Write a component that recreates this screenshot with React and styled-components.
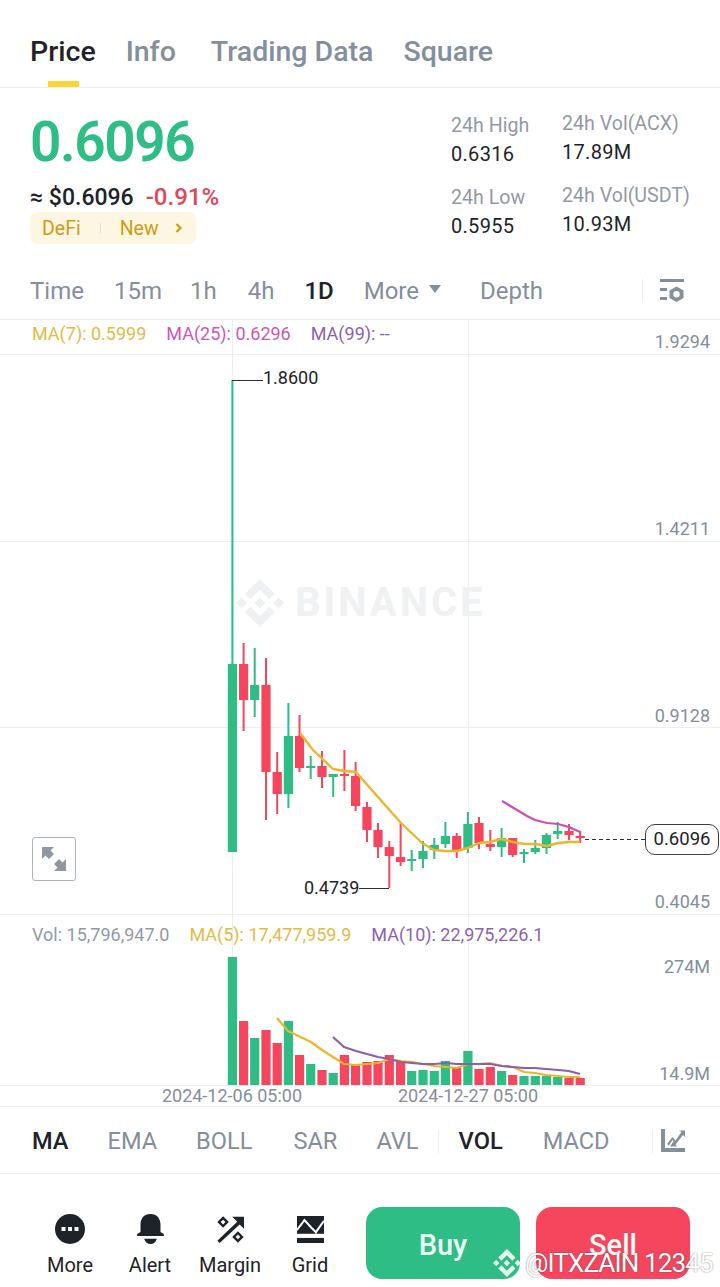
import styled, { createGlobalStyle } from 'styled-components'

const GREEN = '#2ebd85'
const RED = '#f6465d'
const DARK = '#1e2329'
const GRAY = '#848e9c'
const LINE = '#eceef0'

const Global = createGlobalStyle`
    html, body { margin: 0; padding: 0; background: #fff; }
    body { font-family: Roboto, "Noto Sans", sans-serif; color: ${DARK}; }
`

const Page = styled.div`
    position: relative;
    width: 720px;
    height: 1287px;
    overflow: hidden;
    background: #fff;
`

const TabBar = styled.div`
    display: flex;
    height: 88px;
    padding: 34px 0 0 30px;
    box-sizing: border-box;
    border-bottom: 1px solid ${LINE};
`

const Tab = styled.div`
    position: relative;
    margin-right: ${p => p.$gap}px;
    font-size: 28.5px;
    line-height: 36px;
    font-weight: 500;
    color: ${p => (p.$active ? DARK : '#848e9c')};
    &::after {
        content: '';
        display: ${p => (p.$active ? 'block' : 'none')};
        position: absolute;
        left: 18px;
        top: 47px;
        width: 31px;
        height: 6px;
        background: #fcd535;
    }
`

const Summary = styled.div`
    display: flex;
    justify-content: space-between;
    height: 177px;
    padding: 0 0 0 30px;
`

const PriceCol = styled.div`
    display: flex;
    flex-direction: column;
    align-items: flex-start;
`

const BigPrice = styled.div`
    margin-top: 21px;
    font-size: 55px;
    line-height: 66px;
    font-weight: 600;
    letter-spacing: -1.4px;
    color: ${GREEN};
`

const FiatRow = styled.div`
    display: flex;
    align-items: baseline;
    gap: 12px;
    margin-top: 8px;
    font-size: 23px;
    line-height: 28px;
    font-weight: 500;
`

const Change = styled.span`
    color: #e0475c;
    font-size: 24px;
`

const TagPill = styled.div`
    display: flex;
    align-items: center;
    width: 166px;
    height: 32px;
    padding: 0 10px 0 12px;
    box-sizing: border-box;
    border-radius: 7px;
    background: #fdf6e3;
    color: #cf9d14;
    font-size: 19.5px;
`

const TagDivider = styled.span`
    width: 1px;
    height: 10px;
    margin: 0 19px;
    background: #eadfc0;
`

const TagChevron = styled.svg`
    margin-left: 15px;
`

const Stats = styled.div`
    display: grid;
    grid-template-columns: 111px 158px;
    grid-template-rows: 72px 72px;
    margin-top: 26px;
`

const Stat = styled.div`
    display: flex;
    flex-direction: column;
    gap: 4px;
    margin-top: ${p => (p.$up ? '-2px' : '0')};
`

const StatLabel = styled.div`
    font-size: 19.6px;
    line-height: 24px;
    color: #929aa5;
`

const StatValue = styled.div`
    font-size: 20px;
    line-height: 24px;
    letter-spacing: 0.3px;
`

const IntervalBar = styled.div`
    display: flex;
    align-items: center;
    padding: 0 0 3px 30px;
    box-sizing: border-box;
    height: 55px;
    border-bottom: 1px solid ${LINE};
    font-size: 24px;
    color: ${GRAY};
`

const Interval = styled.span`
    margin-right: ${p => p.$gap}px;
    color: ${p => (p.$active ? DARK : GRAY)};
    font-weight: ${p => (p.$active ? 500 : 400)};
`

const Caret = styled.span`
    width: 0;
    height: 0;
    margin: -4px 39px 0 10px;
    border-left: 6.5px solid transparent;
    border-right: 6.5px solid transparent;
    border-top: 8px solid ${GRAY};
`

const BarDivider = styled.span`
    width: 1px;
    height: 24px;
    background: ${LINE};
    margin-right: ${p => p.$gap}px;
`

const ChartPanel = styled.div`
    position: relative;
    height: 786px;
    border-bottom: 1px solid ${LINE};
`

const ChartSvg = styled.svg`
    position: absolute;
    left: 0;
    top: 0;
`

const Legend = styled.div`
    position: absolute;
    left: ${p => p.$left}px;
    top: ${p => p.$top}px;
    display: flex;
    gap: ${p => p.$gap}px;
    font-size: ${p => p.$size}px;
    line-height: 24px;
    white-space: nowrap;
`

const LegendItem = styled.span`
    color: ${p => p.$color};
`

const AxisLabel = styled.div`
    position: absolute;
    right: 10px;
    top: ${p => p.$top - 320 - 12}px;
    font-size: 18px;
    line-height: 24px;
    color: ${GRAY};
`

const DateLabel = styled.div`
    position: absolute;
    left: ${p => p.$center - 100}px;
    top: ${p => p.$top - 320 - 12}px;
    width: 200px;
    text-align: center;
    font-size: 18px;
    line-height: 24px;
    color: ${GRAY};
`

const Annotation = styled.div`
    position: absolute;
    left: ${p => p.$left}px;
    top: ${p => p.$top - 320 - 12}px;
    font-size: 18px;
    line-height: 24px;
    color: ${DARK};
`

const PriceTag = styled.div`
    position: absolute;
    left: 645px;
    top: 504px;
    width: 74px;
    height: 31px;
    box-sizing: border-box;
    border: 1px solid #3a3f45;
    border-radius: 10px;
    background: #fff;
    font-size: 18.5px;
    line-height: 29px;
    text-align: center;
    color: ${DARK};
`

const ExpandButton = styled.div`
    position: absolute;
    left: 32px;
    top: 517px;
    width: 44px;
    height: 44px;
    box-sizing: border-box;
    display: flex;
    align-items: center;
    justify-content: center;
    border: 1px solid #aeb4bc;
    border-radius: 3px;
    background: #fff;
`

const Watermark = styled.div`
    position: absolute;
    left: 236px;
    top: 259px;
    display: flex;
    align-items: center;
    gap: 11px;
    color: #f0f1f2;
    font-size: 40px;
    line-height: 48px;
    font-weight: 700;
    letter-spacing: 3px;
`

const IndicatorBar = styled.div`
    display: flex;
    align-items: center;
    height: 67px;
    padding: 2px 0 0 32px;
    box-sizing: border-box;
    border-bottom: 1px solid ${LINE};
    font-size: 23.6px;
    color: ${GRAY};
`

const Footer = styled.div`
    display: flex;
    align-items: flex-start;
    padding: 33px 0 0 30px;
`

const ActionList = styled.div`
    display: flex;
    width: 320px;
    margin-right: 16px;
`

const Action = styled.div`
    display: flex;
    flex-direction: column;
    align-items: center;
    width: 80px;
    font-size: 20px;
    line-height: 26px;
    gap: 8px;
    margin-top: 7px;
`

const ActionIcon = styled.div`
    display: flex;
    align-items: center;
    justify-content: center;
    height: 30px;
`

const TradeButton = styled.div`
    display: flex;
    align-items: center;
    justify-content: center;
    width: 154px;
    height: 72px;
    margin-right: 16px;
    padding-top: 3px;
    box-sizing: border-box;
    border-radius: 16px;
    background: ${p => p.$color};
    color: #eafbf4;
    font-size: 29px;
    font-weight: 500;
`

const PostTag = styled.div`
    position: absolute;
    left: 493px;
    top: 1249px;
    display: flex;
    align-items: center;
    gap: 4px;
    color: #fff;
    font-size: 26px;
    line-height: 28px;
    letter-spacing: -0.85px;
    white-space: nowrap;
    text-shadow: 0 0 1.5px rgba(40, 45, 50, 0.7);
`

// [x, wick top, wick bottom, body top, body bottom, up?, volume top]
const candles = [
    [232.4, 380, 852, 664, 852, 1, 957],
    [243.6, 643, 731, 664, 700, 0, 1021],
    [254.7, 648, 717, 685, 700, 1, 1038],
    [266, 658, 820, 685, 772, 0, 1030],
    [277.2, 752, 814, 772, 794, 0, 1043],
    [288.4, 703, 808, 736, 794, 1, 1021],
    [299.5, 715, 772, 736, 768, 0, 1055],
    [310.7, 756, 779, 766, 768, 1, 1064],
    [322, 751, 788, 766, 777, 0, 1070],
    [333.2, 774, 797, 774, 777, 1, 1073],
    [344.4, 750, 791, 774, 776, 0, 1055],
    [355.6, 762, 811, 776, 806, 0, 1064],
    [367, 802, 842, 807, 830, 0, 1062],
    [378, 823, 858, 830, 847, 0, 1061],
    [389.3, 841, 888, 847, 856, 0, 1055],
    [400.6, 823, 866, 857, 862, 0, 1062],
    [411.7, 850, 871, 859, 861, 1, 1071],
    [423, 841, 868, 851, 859, 1, 1070],
    [434.3, 838, 859, 845, 850, 1, 1071],
    [445.4, 822, 848, 836, 844, 1, 1061],
    [456.7, 833, 858, 836, 850, 0, 1068],
    [467.9, 812, 853, 824, 848, 1, 1051],
    [479, 817, 849, 823, 843, 0, 1069],
    [490.3, 830, 851, 844, 847, 0, 1067],
    [501.6, 828, 857, 838, 847, 1, 1071],
    [512.7, 838, 857, 838, 855, 0, 1075],
    [524, 849, 863, 852, 854, 1, 1076],
    [535.3, 840, 854, 848, 852, 1, 1076],
    [546.5, 833, 854, 835, 848, 1, 1076],
    [557.7, 822, 839, 831, 834, 1, 1077],
    [569, 824, 840, 831, 835, 0, 1078],
    [580.2, 831, 843, 836, 838, 0, 1078],
]

const ma7 = '300,733 313,750 333,769 345,771 356,772 378,797 400,822 422,843 434,850 445,851 457,851 468,848 479,843 490,842 501,839 513,842 524,844 535,844 547,846 558,843 569,842 580,842'
const ma25 = '502,801 517,810 527,816 535,820 547,823 558,824 569,827 580,832'
const volMa5 = '277,1018 288,1031 311,1042 322,1050 333,1057 344,1064 356,1065 367,1064 378,1063 389,1059 401,1061 412,1062 423,1064 434,1066 446,1067 457,1068 468,1064 479,1064 490,1063 502,1066 513,1067 524,1072 535,1073 546,1075 558,1076 569,1077 580,1077'
const volMa10 = '333,1037 344,1047 356,1051 367,1054 378,1057 389,1059 401,1062 412,1063 423,1064 434,1064 446,1063 457,1064 468,1064 479,1064 490,1064 502,1066 513,1067 524,1068 535,1068 546,1069 558,1070 569,1071 580,1074'

const BinanceMark = ({ size, color }) => (
    <svg width={size} height={size} viewBox="0 0 126.6 126.6" fill={color}>
        <path d="m38.2 53.2 24.6-24.6 24.6 24.6 14.3-14.3L62.8 0 23.9 38.9z" />
        <path d="m0 63.3 14.3-14.3 14.3 14.3-14.3 14.3z" />
        <path d="m38.2 73.4 24.6 24.6 24.6-24.6 14.3 14.3-38.9 38.9-38.9-38.9z" />
        <path d="m98 63.3 14.3-14.3 14.3 14.3-14.3 14.3z" />
        <path d="M77.3 63.3 62.8 48.8 48.3 63.3l14.5 14.5z" />
    </svg>
)

const Chart = () => (
    <ChartSvg width="720" height="786" viewBox="0 320 720 786">
        <g stroke={LINE} strokeWidth="1" shapeRendering="crispEdges">
            <line x1="0" x2="720" y1="354" y2="354" />
            <line x1="0" x2="720" y1="541" y2="541" />
            <line x1="0" x2="720" y1="727" y2="727" />
            <line x1="0" x2="720" y1="914" y2="914" />
            <line x1="0" x2="720" y1="1085" y2="1085" />
            <line x1="232.5" x2="232.5" y1="320" y2="1085" />
            <line x1="468.5" x2="468.5" y1="320" y2="1085" />
        </g>
        {candles.map(([x, wt, wb, bt, bb, up, vt]) => {
            const color = up ? GREEN : RED
            return (
                <g key={x} fill={color}>
                    <rect x={x - 1} y={wt} width="2" height={wb - wt} />
                    <rect x={x - 4.6} y={bt} width="9.2" height={Math.max(bb - bt, 2)} />
                    <rect x={x - 4.6} y={vt} width="9.2" height={1085 - vt} />
                </g>
            )
        })}
        <polyline points={ma7} fill="none" stroke="#ecb52c" strokeWidth="2.4" strokeLinejoin="round" />
        <polyline points={ma25} fill="none" stroke="#cc4fb5" strokeWidth="2.2" strokeLinejoin="round" />
        <polyline points={volMa5} fill="none" stroke="#ecb52c" strokeWidth="2.2" strokeLinejoin="round" />
        <polyline points={volMa10} fill="none" stroke="#8a5fac" strokeWidth="2.2" strokeLinejoin="round" />
        <g stroke="#2b3036" strokeWidth="1" shapeRendering="crispEdges">
            <line x1="232" x2="263" y1="380.5" y2="380.5" />
            <line x1="359" x2="389" y1="888.5" y2="888.5" />
            <line x1="585" x2="645" y1="839.5" y2="839.5" strokeDasharray="4 3" />
        </g>
    </ChartSvg>
)

const App = () => (
    <Page>
        <Global />
        <TabBar>
            <Tab $active $gap={30}>Price</Tab>
            <Tab $gap={35}>Info</Tab>
            <Tab $gap={30}>Trading Data</Tab>
            <Tab $gap={0}>Square</Tab>
        </TabBar>

        <Summary>
            <PriceCol>
                <BigPrice>0.6096</BigPrice>
                <FiatRow>
                    <span>≈ $0.6096</span>
                    <Change>-0.91%</Change>
                </FiatRow>
                <TagPill>
                    <span>DeFi</span>
                    <TagDivider />
                    <span>New</span>
                    <TagChevron width="10" height="12" viewBox="0 0 10 12">
                        <path d="M2.5 2 6.5 6 2.5 10" fill="none" stroke="#cf9d14" strokeWidth="2.2" />
                    </TagChevron>
                </TagPill>
            </PriceCol>
            <Stats>
                <Stat>
                    <StatLabel>24h High</StatLabel>
                    <StatValue>0.6316</StatValue>
                </Stat>
                <Stat $up>
                    <StatLabel>24h Vol(ACX)</StatLabel>
                    <StatValue>17.89M</StatValue>
                </Stat>
                <Stat>
                    <StatLabel>24h Low</StatLabel>
                    <StatValue>0.5955</StatValue>
                </Stat>
                <Stat $up>
                    <StatLabel>24h Vol(USDT)</StatLabel>
                    <StatValue>10.93M</StatValue>
                </Stat>
            </Stats>
        </Summary>

        <IntervalBar>
            <Interval $gap={30}>Time</Interval>
            <Interval $gap={28}>15m</Interval>
            <Interval $gap={31}>1h</Interval>
            <Interval $gap={30}>4h</Interval>
            <Interval $gap={30} $active>1D</Interval>
            <Interval $gap={0}>More</Interval>
            <Caret />
            <Interval $gap={99}>Depth</Interval>
            <BarDivider $gap={17} />
            <svg width="26" height="26" viewBox="0 0 26 26" fill="#848e9c">
                <rect x="0" y="1" width="24" height="3" />
                <rect x="0" y="10" width="7" height="3" />
                <rect x="0" y="19" width="7" height="3" />
                <path fillRule="evenodd" d="M16.500 8.500l7 4v7.500l-7 4-7-4v-7.500zM16.500 13a3.200 3.200 0 1 0 0 6.400 3.200 3.200 0 0 0 0-6.400z" />
            </svg>
        </IntervalBar>

        <ChartPanel>
            <Chart />
            <Legend $left={32} $top={2} $gap={20} $size={18}>
                <LegendItem $color="#e3bb45">MA(7): 0.5999</LegendItem>
                <LegendItem $color="#cc57b8">MA(25): 0.6296</LegendItem>
                <LegendItem $color="#8a63ad">MA(99): --</LegendItem>
            </Legend>
            <Legend $left={32} $top={603} $gap={20} $size={18}>
                <LegendItem $color="#929aa5">Vol: 15,796,947.0</LegendItem>
                <LegendItem $color="#e3bb45">MA(5): 17,477,959.9</LegendItem>
                <LegendItem $color="#8a63ad">MA(10): 22,975,226.1</LegendItem>
            </Legend>
            <Watermark>
                <BinanceMark size={48} color="#eff0f1" />
                <span>BINANCE</span>
            </Watermark>
            <AxisLabel $top={342}>1.9294</AxisLabel>
            <AxisLabel $top={529}>1.4211</AxisLabel>
            <AxisLabel $top={716}>0.9128</AxisLabel>
            <AxisLabel $top={902}>0.4045</AxisLabel>
            <AxisLabel $top={967}>274M</AxisLabel>
            <AxisLabel $top={1074}>14.9M</AxisLabel>
            <DateLabel $center={232} $top={1096}>2024-12-06 05:00</DateLabel>
            <DateLabel $center={468} $top={1096}>2024-12-27 05:00</DateLabel>
            <Annotation $left={263} $top={378}>1.8600</Annotation>
            <Annotation $left={304} $top={888}>0.4739</Annotation>
            <PriceTag>0.6096</PriceTag>
            <ExpandButton>
                <svg width="26" height="26" viewBox="0 0 26 26" fill="#8f97a3">
                    <path d="M1 1h12L9.500 4.500 13 8l-5 5-3.500-3.500L1 13z" />
                    <path d="M25 25H13l3.500-3.500L13 18l5-5 3.500 3.500L25 13z" />
                </svg>
            </ExpandButton>
        </ChartPanel>

        <IndicatorBar>
            <Interval $gap={39} $active>MA</Interval>
            <Interval $gap={39}>EMA</Interval>
            <Interval $gap={41}>BOLL</Interval>
            <Interval $gap={39}>SAR</Interval>
            <Interval $gap={19}>AVL</Interval>
            <BarDivider $gap={20} />
            <Interval $gap={40} $active>VOL</Interval>
            <Interval $gap={42}>MACD</Interval>
            <BarDivider $gap={8} />
            <svg width="24" height="24" viewBox="0 0 24 24" fill="#848e9c">
                <path d="M0 0h4v19h20v4H0z" />
                <path d="M6 15 11.500 8l3 3.500L20.500 3 18 1.500h6v6.500l-2-2-7.500 9.500L11.500 11 8 16.500zM9 17.500h7l-3.500-5z" />
            </svg>
        </IndicatorBar>

        <Footer>
            <ActionList>
                <Action>
                    <ActionIcon>
                        <svg width="30" height="30" viewBox="0 0 30 30">
                            <circle cx="15" cy="15" r="15" fill={DARK} />
                            <rect x="6.500" y="13" width="4" height="4" fill="#fff" />
                            <rect x="13" y="13" width="4" height="4" fill="#fff" />
                            <rect x="19.500" y="13" width="4" height="4" fill="#fff" />
                        </svg>
                    </ActionIcon>
                    More
                </Action>
                <Action>
                    <ActionIcon>
                        <svg width="27" height="30" viewBox="0 0 80 90" fill={DARK}>
                            <path d="M40 0C20 0 10 14 10 32v22L0 60v6h80v-6L70 54V32C70 14 60 0 40 0z" />
                            <path d="M21 74h38c-3 10-10 16-19 16s-16-6-19-16z" />
                        </svg>
                    </ActionIcon>
                    Alert
                </Action>
                <Action>
                    <ActionIcon>
                        <svg width="27" height="27" viewBox="0 0 80 80" fill={DARK}>
                            <path d="M45 2h35v36L67 25 8 80 1 73 60 17z" />
                            <path fillRule="evenodd" d="M18 1l17 17-17 17L1 18zM18 11l-7 7 7 7 7-7zM62 45l17 17-17 17-17-17zM62 55l-7 7 7 7 7-7z" />
                        </svg>
                    </ActionIcon>
                    Margin
                </Action>
                <Action>
                    <ActionIcon>
                        <svg width="27" height="27" viewBox="0 0 80 80">
                            <path d="M0 0h80v52H0z" fill={DARK} />
                            <path d="M0 42 22 12l20 22 14 14 24-34" fill="none" stroke="#fff" strokeWidth="6" />
                            <path d="M0 46 22 20 42 42l12 10H0zM80 22 60 52h20z" fill={DARK} />
                            <path d="M0 65h80v15H0z" fill={DARK} />
                        </svg>
                    </ActionIcon>
                    Grid
                </Action>
            </ActionList>
            <TradeButton $color={GREEN}>Buy</TradeButton>
            <TradeButton $color="#f6465d">Sell</TradeButton>
        </Footer>

        <PostTag>
            <BinanceMark size={28} color="#e4f7ef" />
            <span>@ITXZAIN 12345</span>
        </PostTag>
    </Page>
)

export default App
